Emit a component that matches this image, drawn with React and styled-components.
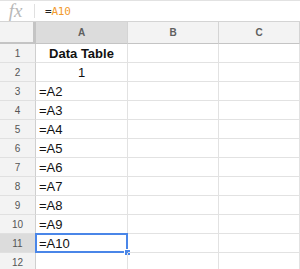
import React from 'react';
import styled, { createGlobalStyle } from 'styled-components';

const GlobalStyle = createGlobalStyle`
  html, body {
    margin: 0;
    padding: 0;
    background: #fff;
    overflow: hidden;
  }
  body {
    font-family: "Liberation Sans", Arial, sans-serif;
  }
`;

const Sheet = styled.div`
  width: 300px;
  height: 269px;
  overflow: hidden;
  background: #fff;
`;

const FormulaBar = styled.div`
  display: flex;
  align-items: center;
  height: 22px;
  border-top: 1px solid #e2e2e2;
  border-bottom: 1px solid #d4d4d4;
  box-sizing: border-box;
`;

const FxLabel = styled.div`
  width: 35px;
  display: flex;
  align-items: center;
  justify-content: center;
  font-family: "Liberation Serif", serif;
  font-style: italic;
  font-size: 19px;
  color: #b8b8b8;
  border-right: 1px solid #e0e0e0;
  height: 14px;
  line-height: 14px;
  box-sizing: border-box;
  padding-right: 3px;
`;

const Formula = styled.div`
  padding-left: 10px;
  font-family: "DejaVu Sans Mono", monospace;
  font-size: 11px;
  color: #222;
  letter-spacing: -0.2px;

  span {
    color: #f29a2e;
  }
`;

const Grid = styled.div`
  display: grid;
  grid-template-columns: 36px 92px 91px 81px;
  grid-template-rows: 22px;
  grid-auto-rows: 19px;
`;

const Corner = styled.div`
  background: #f3f3f3;
  border-right: 3px solid #c4c4c4;
  border-bottom: 2px solid #c4c4c4;
  box-sizing: border-box;
`;

const ColHead = styled.div`
  background: ${p => (p.$active ? '#dcdcdc' : '#f3f3f3')};
  border-right: 1px solid #d4d4d4;
  border-bottom: 1px solid #c4c4c4;
  box-sizing: border-box;
  display: flex;
  align-items: center;
  justify-content: center;
  font-size: 10px;
  font-weight: bold;
  color: #5f5f5f;
`;

const RowHead = styled.div`
  background: ${p => (p.$active ? '#dcdcdc' : '#f3f3f3')};
  border-right: 1px solid #cfcfcf;
  border-bottom: 1px solid #e0e0e0;
  box-sizing: border-box;
  display: flex;
  align-items: center;
  justify-content: center;
  font-size: 10px;
  color: #555;
`;

const Cell = styled.div`
  position: relative;
  border-right: 1px solid #e2e2e2;
  border-bottom: 1px solid #e2e2e2;
  box-sizing: border-box;
  display: flex;
  align-items: center;
  justify-content: ${p => (p.$center ? 'center' : 'flex-start')};
  padding: 0 3px;
  font-size: 13px;
  font-weight: ${p => (p.$bold ? 'bold' : 'normal')};
  color: #111;
  white-space: nowrap;
`;

const Selection = styled.div`
  position: absolute;
  left: -1px;
  top: -1px;
  right: -1px;
  bottom: -1px;
  border: 2px solid #4a86e8;
  pointer-events: none;
`;

const Handle = styled.div`
  position: absolute;
  right: -5px;
  bottom: -5px;
  width: 7px;
  height: 7px;
  background: #4a86e8;
  border: 1px solid #fff;
  box-sizing: border-box;
`;

const rows = [
  { a: 'Data Table', bold: true, center: true },
  { a: '1', center: true },
  { a: '=A2' },
  { a: '=A3' },
  { a: '=A4' },
  { a: '=A5' },
  { a: '=A6' },
  { a: '=A7' },
  { a: '=A8' },
  { a: '=A9' },
  { a: '=A10', selected: true },
  { a: '' },
];

export default function App() {
  return (
    <Sheet>
      <GlobalStyle />
      <FormulaBar>
        <FxLabel>fx</FxLabel>
        <Formula>=<span>A10</span></Formula>
      </FormulaBar>
      <Grid>
        <Corner />
        <ColHead $active>A</ColHead>
        <ColHead>B</ColHead>
        <ColHead>C</ColHead>
        {rows.map((r, i) => (
          <React.Fragment key={i}>
            <RowHead $active={r.selected}>{i + 1}</RowHead>
            <Cell $bold={r.bold} $center={r.center}>
              {r.a}
              {r.selected && (
                <Selection>
                  <Handle />
                </Selection>
              )}
            </Cell>
            <Cell />
            <Cell />
          </React.Fragment>
        ))}
      </Grid>
    </Sheet>
  );
}
